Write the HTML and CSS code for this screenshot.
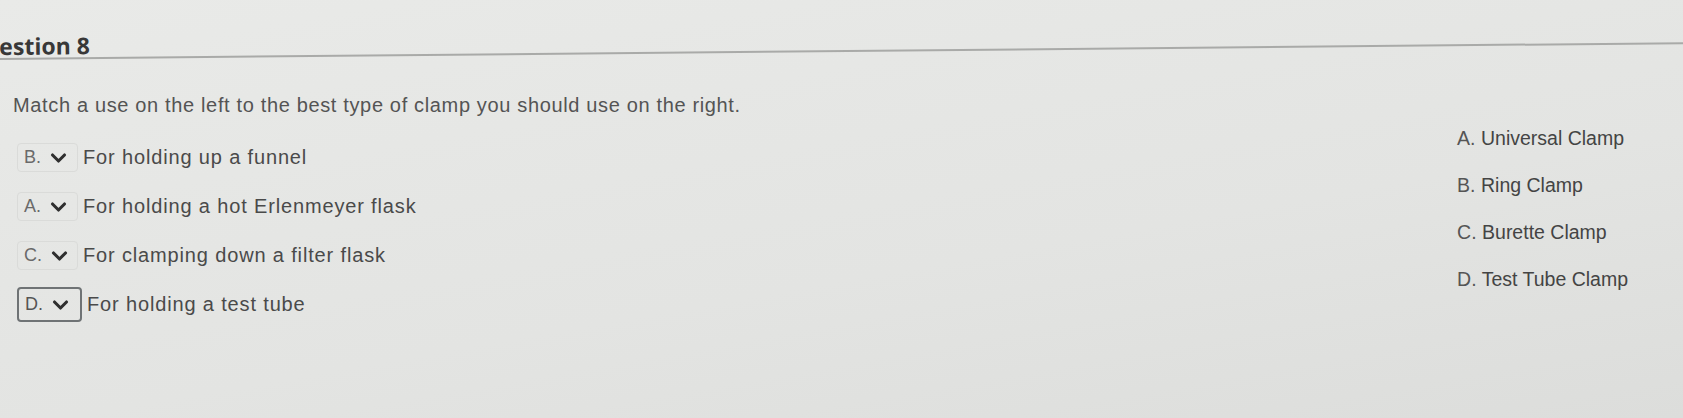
FILE: index.html
```html
<!DOCTYPE html>
<html lang="en">
<head>
  <meta charset="UTF-8" />
  <title>Question 8</title>
  <link rel="stylesheet" href="styles.css">
</head>
<body>
  <div class="question-header">
    <h2 class="question-title">Question 8</h2>
  </div>

  <div class="question-body">
    <p class="question-text">Match a use on the left to the best type of clamp you should use on the right.</p>

    <div class="match-area">
      <div class="match-left">
        <div class="match-row">
          <div class="match-select">B. <svg class="chevron" viewBox="0 0 14 10"><path d="M2 2.5l5 5 5-5"/></svg></div>
          <span class="match-label">For holding up a funnel</span>
        </div>
        <div class="match-row">
          <div class="match-select">A. <svg class="chevron" viewBox="0 0 14 10"><path d="M2 2.5l5 5 5-5"/></svg></div>
          <span class="match-label">For holding a hot Erlenmeyer flask</span>
        </div>
        <div class="match-row">
          <div class="match-select">C. <svg class="chevron" viewBox="0 0 14 10"><path d="M2 2.5l5 5 5-5"/></svg></div>
          <span class="match-label">For clamping down a filter flask</span>
        </div>
        <div class="match-row">
          <div class="match-select active">D. <svg class="chevron" viewBox="0 0 14 10"><path d="M2 2.5l5 5 5-5"/></svg></div>
          <span class="match-label">For holding a test tube</span>
        </div>
      </div>

      <ul class="match-right">
        <li><span class="letter">A.</span> Universal Clamp</li>
        <li><span class="letter">B.</span> Ring Clamp</li>
        <li><span class="letter">C.</span> Burette Clamp</li>
        <li><span class="letter">D.</span> Test Tube Clamp</li>
      </ul>
    </div>
  </div>
</body>
</html>
```

FILE: styles.css
```css
* {
  margin: 0;
  padding: 0;
  box-sizing: border-box;
}

body {
  background: linear-gradient(170deg, #e9eae8 0%, #e3e4e2 60%, #dcdddb 100%);
  font-family: 'Liberation Sans', Arial, sans-serif;
  color: #4e4e4e;
  height: 418px;
  overflow: hidden;
}

.question-header {
  height: 60px;
  padding-top: 33px;
  border-bottom: 2px solid #a9aaa8;
  transform: rotate(-0.54deg);
  transform-origin: left bottom;
  margin-right: -20px;
}

.question-title {
  font-family: 'Open Sans', sans-serif;
  font-weight: 700;
  font-size: 23px;
  line-height: 26px;
  color: #383838;
  margin-left: -34px;
}

.question-body {
  padding: 33px 0 0 13px;
}

.question-text {
  font-size: 20px;
  letter-spacing: 0.65px;
  line-height: 24px;
  color: #545454;
}

.match-area {
  display: flex;
  justify-content: space-between;
  padding-right: 55px;
}

.match-left {
  display: flex;
  flex-direction: column;
  gap: 14px;
  padding-top: 23px;
  margin-left: 4px;
}

.match-row {
  display: flex;
  align-items: center;
  gap: 5px;
  height: 35px;
}

.match-select {
  display: flex;
  align-items: center;
  gap: 9px;
  width: 61px;
  height: 29px;
  padding-left: 6px;
  border: 1px solid #dadbd9;
  border-radius: 4px;
  font-size: 18px;
  color: #6a6a6a;
}

.match-select.active {
  width: 65px;
  height: 35px;
  border: 2px solid #6f7375;
  color: #555;
}

.chevron {
  width: 17px;
  height: 12px;
  fill: none;
  stroke: #2f2f2f;
  stroke-width: 2.6;
  stroke-linecap: round;
  stroke-linejoin: round;
}

.match-label {
  font-size: 20px;
  letter-spacing: 0.85px;
  color: #4a4a4a;
}

.match-right {
  list-style: none;
  display: flex;
  flex-direction: column;
  gap: 23px;
  padding-top: 9px;
}

.match-right li {
  font-size: 19.5px;
  line-height: 24px;
  color: #444;
}

.letter {
  color: #555;
}
```
